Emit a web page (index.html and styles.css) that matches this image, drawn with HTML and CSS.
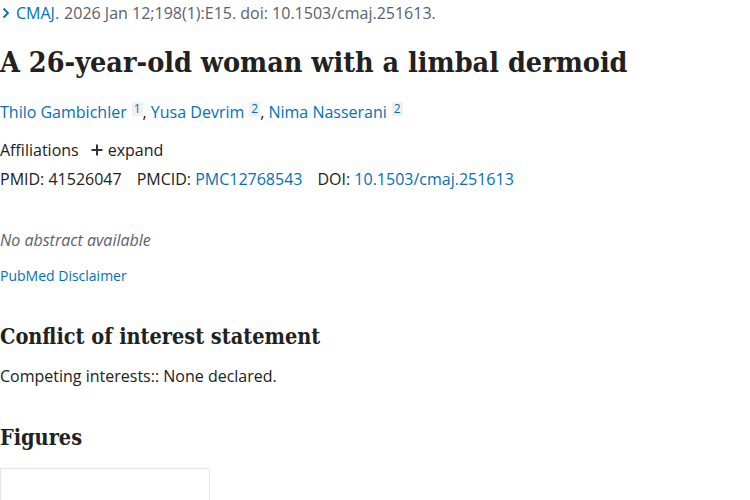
FILE: index.html
```html
<!DOCTYPE html>
<html lang="en">
<head>
<meta charset="utf-8">
<title>A 26-year-old woman with a limbal dermoid</title>
<link rel="stylesheet" href="styles.css">
</head>
<body>
<main class="article">
  <div class="citation">
    <svg class="chev" width="10" height="12" viewBox="0 0 10 12"><path d="M2.5 1.5 L7 6 L2.5 10.5" fill="none" stroke="#0071bc" stroke-width="1.8"/></svg>
    <a class="journal" href="#">CMAJ.</a>
    <span class="cit">2026 Jan 12;198(1):E15. doi: 10.1503/cmaj.251613.</span>
  </div>
  <h1 class="title">A 26-year-old woman with a limbal dermoid</h1>
  <div class="authors">
    <a href="#">Thilo Gambichler</a><sup class="ref">1</sup>,
    <a href="#">Yusa Devrim</a><sup class="ref">2</sup>,
    <a href="#">Nima Nasserani</a><sup class="ref">2</sup>
  </div>
  <div class="affil">
    <span>Affiliations</span>
    <span class="expand"><svg class="plus" width="12" height="12" viewBox="0 0 12 12"><path d="M6 0.5 V11.5 M0.5 6 H11.5" stroke="#333" stroke-width="2"/></svg> expand</span>
  </div>
  <div class="ids">
    <span>PMID: 41526047</span>
    <span>PMCID: <a href="#">PMC12768543</a></span>
    <span>DOI: <a href="#">10.1503/cmaj.251613</a></span>
  </div>
  <p class="noabs">No abstract available</p>
  <a class="disclaimer" href="#">PubMed Disclaimer</a>
  <h2 class="section">Conflict of interest statement</h2>
  <p class="text">Competing interests:: None declared.</p>
  <h2 class="section figs">Figures</h2>
  <div class="figbox"></div>
</main>
</body>
</html>
```
FILE: styles.css
```css
html, body { margin: 0; padding: 0; background: #fff; }
body { font-family: "Open Sans", "Noto Sans", sans-serif; color: #212121; font-size: 16px; }
a { color: #0071bc; text-decoration: none; }
.article { padding: 0; }
.citation { display: flex; align-items: center; gap: 5px; height: 26px; color: #5b616b; font-size: 16px; }
.chev { margin-left: 1px; }
.journal { color: #0071bc; }
.title { font-family: "DejaVu Serif", serif; font-stretch: condensed; font-weight: 600; font-size: 28.5px; margin: 17px 0 0; line-height: 38px; color: #212121; }
.authors { margin-top: 19px; line-height: 24px; }
.ref { display: inline-block; background: #f0f0f0; color: #0071bc; font-size: 12px; line-height: 14px; padding: 0 2px; vertical-align: top; margin-left: 5px; margin-top: 2px; }
.affil { margin-top: 14px; display: flex; gap: 12px; line-height: 24px; }
.expand { display: flex; align-items: center; gap: 5px; }
.plus { flex: none; }
.ids { margin-top: 5px; display: flex; gap: 15px; line-height: 24px; }
.noabs { font-style: italic; color: #5b616b; margin: 37px 0 0; line-height: 24px; }
.disclaimer { display: block; font-size: 14px; margin-top: 14px; line-height: 20px; }
.section { font-family: "DejaVu Serif", serif; font-stretch: condensed; font-weight: 600; font-size: 21.5px; margin: 36px 0 0; line-height: 30px; }
.text { margin: 12px 0 0; line-height: 24px; }
.figs { margin-top: 35px; }
.figbox { margin-top: 15px; width: 208px; height: 60px; border: 1px solid #e6e6e6; }
```
